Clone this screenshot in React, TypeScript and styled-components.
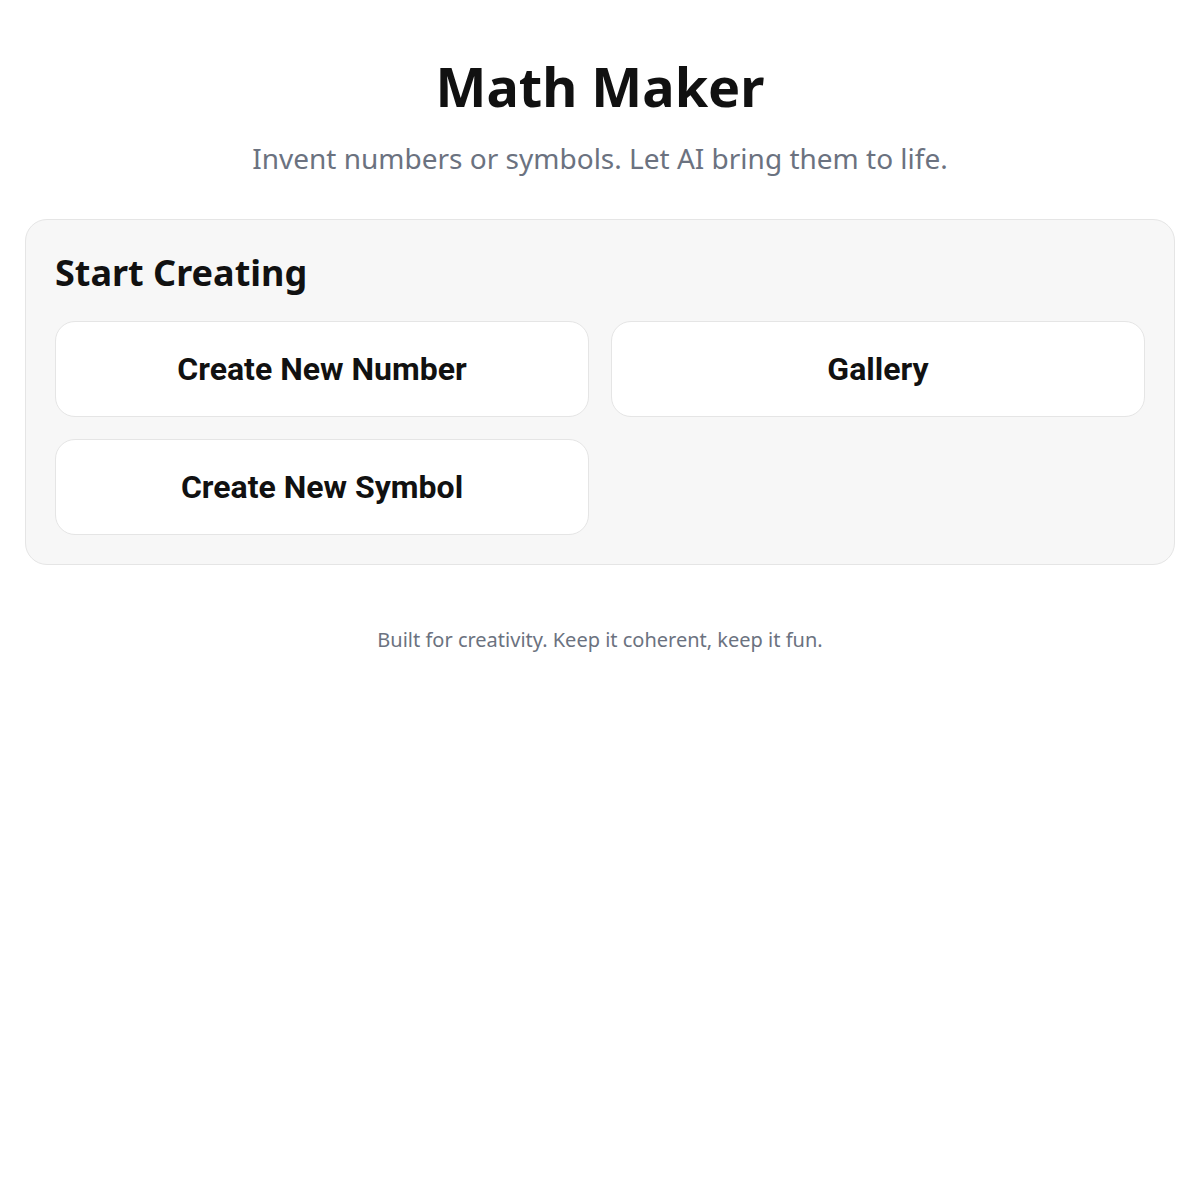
import styled, { createGlobalStyle } from 'styled-components';

const GlobalStyle = createGlobalStyle`
  html, body {
    margin: 0;
    padding: 0;
    background: #ffffff;
    font-family: "Noto Sans", "Open Sans", sans-serif;
    color: #111111;
  }
  * { box-sizing: border-box; }
`;

const Page = styled.main`
  padding: 49px 25px 40px;
  display: flex;
  flex-direction: column;
  align-items: center;
`;

const Title = styled.h1`
  margin: 0;
  font-size: 54px;
  font-weight: 700;
  line-height: normal;
  color: #111111;
`;

const Subtitle = styled.p`
  margin: 16px 0 0;
  font-size: 28px;
  line-height: normal;
  color: #6b7280;
`;

const Card = styled.section`
  align-self: stretch;
  margin-top: 42px;
  padding: 28px 29px 29px;
  background: #f7f7f7;
  border: 1px solid #e5e5e5;
  border-radius: 22px;
`;

const CardTitle = styled.h2`
  margin: 0 0 24px;
  font-size: 36px;
  font-weight: 700;
  line-height: normal;
  color: #111111;
`;

const ButtonGrid = styled.div`
  display: grid;
  grid-template-columns: 1fr 1fr;
  gap: 22px;
`;

const ActionButton = styled.button`
  height: 96px;
  background: #ffffff;
  border: 1.5px solid #e5e5e5;
  border-radius: 20px;
  font-family: Roboto, "Noto Sans", sans-serif;
  font-size: 32px;
  font-weight: 700;
  color: #111111;
  cursor: pointer;
`;

const Footer = styled.footer`
  margin-top: 61px;
  font-size: 20px;
  line-height: normal;
  color: #6b7280;
`;

export default function App() {
  return (
    <>
      <GlobalStyle />
      <Page>
        <Title>Math Maker</Title>
        <Subtitle>Invent numbers or symbols. Let AI bring them to life.</Subtitle>
        <Card>
          <CardTitle>Start Creating</CardTitle>
          <ButtonGrid>
            <ActionButton>Create New Number</ActionButton>
            <ActionButton>Gallery</ActionButton>
            <ActionButton>Create New Symbol</ActionButton>
          </ButtonGrid>
        </Card>
        <Footer>Built for creativity. Keep it coherent, keep it fun.</Footer>
      </Page>
    </>
  );
}
